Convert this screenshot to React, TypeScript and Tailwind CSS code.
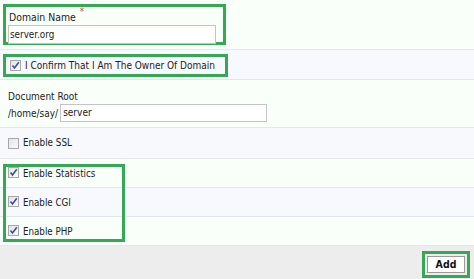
import React from 'react';

const font = { fontFamily: '"DejaVu Sans Condensed", "DejaVu Sans", Tahoma, sans-serif' };

function Check({ checked }: { checked: boolean }) {
  return (
    <span className="relative inline-flex w-[11px] h-[11px] shrink-0 border border-[#a8a8a8] bg-gradient-to-br from-[#e4e4e4] to-[#fbfbfb]">
      {checked && (
        <svg viewBox="0 0 11 11" className="absolute -left-px -top-px w-[11px] h-[11px]">
          <path d="M2.5 5.5 L4.5 8 L8.8 2.2" fill="none" stroke="#3a4f9e" strokeWidth="1.6" />
        </svg>
      )}
    </span>
  );
}

const outline = 'border-[3px] border-[#34a853]';

export default function App() {
  return (
    <div style={font} className="relative w-[474px] h-[279px] overflow-hidden bg-white text-[10px] text-[#222] flex flex-col">
      {/* domain name */}
      <div className="h-[50px] bg-[#f9fff9] border-b border-[#e5e8e5] pt-[4px] pl-[3px]">
        <div className={`${outline} w-[223px] h-[41px] pl-[2px] pt-[2px]`}>
          <div className="h-[16px] leading-[16px] pl-[1px] text-[10.4px]">
            Domain Name
            <span className="relative -top-[6px] ml-[4px] text-[#e04040] text-[10px] leading-none">*</span>
          </div>
          <div className="w-[208px] h-[19px] border border-[#c4c4c4] bg-white pl-[1px] leading-[17px] text-[9.8px]">server.org</div>
        </div>
      </div>

      {/* confirm */}
      <div className="h-[30px] bg-[#f8f9fe] border-b border-[#e5e6ea] pt-[4px] pl-[3px]">
        <div className={`${outline} w-[225px] h-[23px] flex items-center gap-[4px] pl-[4px]`}>
          <Check checked />
          <span>I Confirm That I Am The Owner Of Domain</span>
        </div>
      </div>

      {/* document root */}
      <div className="h-[48px] bg-[#f9fff9] border-b border-[#e5e8e5] pl-[8px] pt-[10px]">
        <div className="h-[13px] leading-[13px]">Document Root</div>
        <div className="flex items-center gap-[2px] mt-[1px]">
          <span>/home/say/</span>
          <div className="w-[207px] h-[18px] border border-[#c4c4c4] bg-white pl-[2px] leading-[16px]">server</div>
        </div>
      </div>

      {/* ssl */}
      <div className="h-[31px] bg-[#f8f9fc] border-b border-[#e5e6ea] flex items-center gap-[4px] pl-[8px]">
        <Check checked={false} />
        <span className="text-[9.8px]">Enable SSL</span>
      </div>

      {/* options */}
      <div className="relative">
        {['Enable Statistics', 'Enable CGI', 'Enable PHP'].map((t, i) => (
          <div
            key={t}
            className={`h-[29px] flex items-start pt-[8px] gap-[4px] pl-[8px] border-b ${
              i === 1 ? 'bg-[#f8f9fe] border-[#e5e6ea]' : 'bg-[#f9fff9] border-[#e5e8e5]'
            }`}
          >
            <Check checked />
            <span className="text-[9.7px] leading-[12px] mt-[1px]">{t}</span>
          </div>
        ))}
        <div className={`absolute left-[3px] top-[5px] w-[122px] h-[78px] ${outline} pointer-events-none`} />
      </div>

      {/* footer */}
      <div className="flex-1 bg-[#ededed] flex items-start justify-end pr-[4px] pt-[5px]">
        <div className={`${outline} p-[2px]`}>
          <button className="w-[38px] h-[17px] bg-white border border-[#9a9a9a] font-bold text-[10.5px] leading-[15px] text-[#111]">
            Add
          </button>
        </div>
      </div>
    </div>
  );
}
